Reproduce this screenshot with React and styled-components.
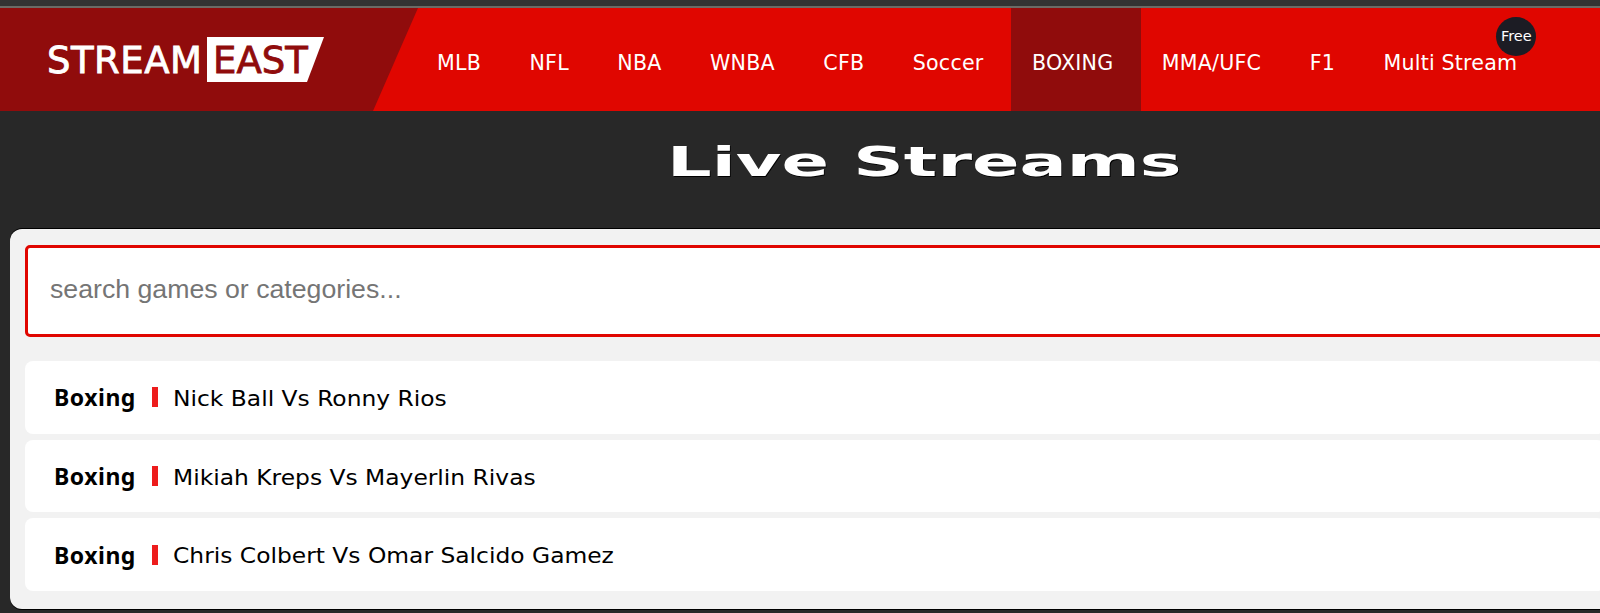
import React from "react";
import styled, { createGlobalStyle } from "styled-components";

const Global = createGlobalStyle`
  html, body {
    margin: 0;
    padding: 0;
    background: #282828;
    overflow: hidden;
    height: 613px;
  }
`;

const TopStrip = styled.div`
  height: 6px;
  background: #333333;
  border-bottom: 2px solid #6b6b66;
`;

const Header = styled.header`
  display: flex;
  height: 103px;
  background: #e00600;
`;

const LogoArea = styled.a`
  display: flex;
  align-items: flex-start;
  width: 418px;
  padding: 29px 0 0 47px;
  box-sizing: border-box;
  background: #900c0c;
  clip-path: polygon(0 0, 100% 0, 373px 100%, 0 100%);
`;

const LogoStream = styled.span`
  width: 160px;
  font: 400 37px/47px "DejaVu Sans", sans-serif;
  letter-spacing: 0.5px;
  color: #ffffff;
  -webkit-text-stroke: 0.8px #ffffff;
`;

const LogoEast = styled.span`
  display: block;
  width: 117px;
  height: 45px;
  padding-left: 6px;
  box-sizing: border-box;
  font: 400 37px/47px "DejaVu Sans", sans-serif;
  color: #900c0c;
  -webkit-text-stroke: 0.8px #900c0c;
  background: #ffffff;
  clip-path: polygon(0 0, 100% 0, 100px 100%, 0 100%);
`;

const Nav = styled.nav`
  display: flex;
  margin-left: -1.5px;
`;

const NavItem = styled.a`
  position: relative;
  display: flex;
  align-items: center;
  padding: 6px 28px 0 20.5px;
  font: 400 20.6px "DejaVu Sans", sans-serif;
  letter-spacing: 0.2px;
  color: #ffffff;
  white-space: nowrap;
  background: ${(p) => (p.$active ? "#900c0c" : "transparent")};
`;

const FreeBadge = styled.span`
  position: absolute;
  top: 9px;
  right: 9px;
  width: 40px;
  height: 39px;
  border-radius: 50%;
  background: #1c1c24;
  font: 400 14.5px/39px "DejaVu Sans", sans-serif;
  letter-spacing: 0;
  text-align: center;
  color: #ffffff;
`;

const TitleWrap = styled.div`
  height: 118px;
  padding: 31px 0 0 667px;
  box-sizing: border-box;
`;

const Title = styled.h1`
  display: inline-block;
  margin: 0;
  font: 700 41px/40px "DejaVu Sans", sans-serif;
  color: #ffffff;
  text-shadow: 0.5px 1px 0 #000000;
  white-space: nowrap;
  transform: scaleX(1.71);
  transform-origin: left center;
`;

const Panel = styled.main`
  margin: 0 -20px 0 10px;
  height: 380px;
  padding: 16px 15px 0;
  box-sizing: border-box;
  background: #f2f2f2;
  border-radius: 12px;
  box-shadow: 0 -1px 0 #000000, 0 1px 0 #000000;
`;

const Search = styled.input`
  display: block;
  width: 100%;
  height: 92px;
  padding: 0 22px 4px;
  box-sizing: border-box;
  border: 3px solid #e00600;
  border-radius: 5px;
  outline: none;
  background: #ffffff;
  font: 400 26.7px "Liberation Sans", Arial, sans-serif;
  &::placeholder {
    color: #757575;
    opacity: 1;
  }
`;

const List = styled.ul`
  display: flex;
  flex-direction: column;
  gap: 6px;
  margin: 24px 0 0;
  padding: 0;
  list-style: none;
`;

const Row = styled.li`
  display: flex;
  align-items: center;
  height: 72.7px;
  padding-left: 29px;
  background: #ffffff;
  border-radius: 8px;
`;

const Category = styled.span`
  width: 98px;
  font: 700 23px "Noto Sans", sans-serif;
  letter-spacing: 0.5px;
  color: #000000;
`;

const Bar = styled.span`
  width: 6px;
  height: 20px;
  background: #ed1c1c;
  margin-right: 15px;
`;

const Match = styled.span`
  display: inline-block;
  padding-top: 3px;
  font: 400 20.5px "DejaVu Sans", sans-serif;
  color: #000000;
  white-space: nowrap;
  transform: scaleX(1.14);
  transform-origin: left center;
`;

const links = ["MLB", "NFL", "NBA", "WNBA", "CFB", "Soccer", "BOXING", "MMA/UFC", "F1", "Multi Stream"];
const matches = ["Nick Ball Vs Ronny Rios", "Mikiah Kreps Vs Mayerlin Rivas", "Chris Colbert Vs Omar Salcido Gamez"];

const App = () => {
  return (
    <>
      <Global />
      <TopStrip />
      <Header>
        <LogoArea>
          <LogoStream>STREAM</LogoStream>
          <LogoEast>EAST</LogoEast>
        </LogoArea>
        <Nav>
          {links.map((link) => (
            <NavItem key={link} $active={link === "BOXING"}>
              {link}
              {link === "Multi Stream" && <FreeBadge>Free</FreeBadge>}
            </NavItem>
          ))}
        </Nav>
      </Header>
      <TitleWrap>
        <Title>Live Streams</Title>
      </TitleWrap>
      <Panel>
        <Search placeholder="search games or categories..." />
        <List>
          {matches.map((match) => (
            <Row key={match}>
              <Category>Boxing</Category>
              <Bar />
              <Match>{match}</Match>
            </Row>
          ))}
        </List>
      </Panel>
    </>
  );
};

export default App;
